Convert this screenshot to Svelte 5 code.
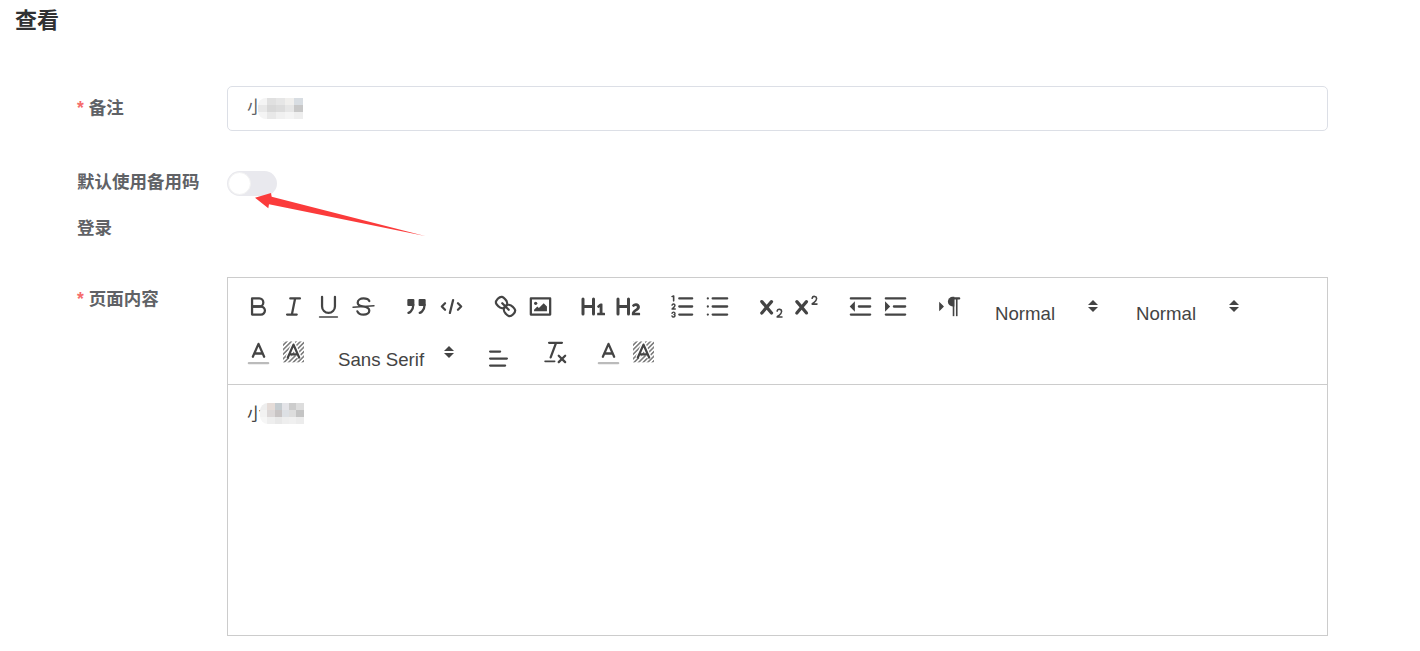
<script>
  const stroke = 'fill:none;stroke:#444;stroke-width:1.4;stroke-linecap:round;stroke-linejoin:round';
  const thin = 'fill:none;stroke:#444;stroke-width:.9;stroke-linecap:round;stroke-linejoin:round';
  const input_cells = [
    '#f4f4f4','#e0e0e0','#e6e6e6','#f0efed','#d8dde2',
    '#e8e8e8','#d8d8d8','#dcdcdc','#e6e6e6','#c8c8c8',
    '#f4f4f4','#e8e8e8','#f0f0f0','#f4f4f4','#eeeeee'
  ];
  const body_cells = [
    '#eeeeee','#e5dcd8','#c5ccd0','#e4e4e8','#cccccc','#dddddd',
    '#f2f2f2','#dcd8d8','#c8c4c4','#dde0e4','#dddddd','#c4c4c4',
    '#f6f6f6','#eeeeee','#e8e8e8','#eeeeee','#f0f0f0','#ececec'
  ];
</script>

<div class="page">
  <h1>查看</h1>

  <form class="form">
    <div class="row row-name">
      <label class="label"><span class="req">*</span> 备注</label>
      <div class="field">
        <div class="input">
          <span>小</span>
          <div class="mosaic input-mosaic">
            {#each input_cells as c}<i style="background:{c}"></i>{/each}
          </div>
        </div>
      </div>
    </div>

    <div class="row row-switch">
      <label class="label">默认使用备用码登录</label>
      <div class="field">
        <div class="switch"><span class="knob"></span></div>
      </div>
    </div>

    <div class="row">
      <label class="label"><span class="req">*</span> 页面内容</label>
      <div class="field">
        <div class="editor">
          <div class="toolbar">
            <div class="group">
              <button type="button" aria-label="bold"><svg viewBox="0 0 18 18"><path style={stroke} d="M5,4H9.5A2.5,2.5,0,0,1,12,6.5v0A2.5,2.5,0,0,1,9.5,9H5Z"/><path style={stroke} d="M5,9h5.5A2.5,2.5,0,0,1,13,11.5v0A2.5,2.5,0,0,1,10.5,14H5Z"/></svg></button>
              <button type="button" aria-label="italic"><svg viewBox="0 0 18 18"><path style={stroke} d="M7 4H13M5 14H11M8 14L10 4"/></svg></button>
              <button type="button" aria-label="underline"><svg viewBox="0 0 18 18"><path style={stroke} d="M5,3V9a4,4,0,0,0,4,4h0a4,4,0,0,0,4-4V3"/><rect x="3" y="15" width="12" height="1" rx=".5" fill="#444"/></svg></button>
              <button type="button" aria-label="strike"><svg viewBox="0 0 18 18"><path style={stroke} d="M12.6 5.6C12 4.4 10.6 4 9 4 7 4 5.4 5 5.4 6.6 5.4 8 7 8.7 9 9c2 .3 3.6 1 3.6 2.6C12.6 13 11 14 9 14c-1.8 0-3.2-.6-3.8-2"/><path style={thin} d="M2.5 9.5L15.5 8.5"/></svg></button>
            </div>
            <div class="group">
              <button type="button" aria-label="blockquote"><svg viewBox="0 0 18 18"><rect style={stroke} x="4" y="5" width="3" height="3"/><rect style={stroke} x="11" y="5" width="3" height="3"/><path style={stroke} d="M7,8c0,4-3,5-3,5"/><path style={stroke} d="M14,8c0,4-3,5-3,5"/><rect x="4" y="5" width="3" height="3" fill="#444"/><rect x="11" y="5" width="3" height="3" fill="#444"/></svg></button>
              <button type="button" aria-label="code"><svg viewBox="0 0 18 18"><path style={stroke} d="M5 7L3 9L5 11M13 7L15 9L13 11M10 5L8 13"/></svg></button>
            </div>
            <div class="group">
              <button type="button" aria-label="link"><svg viewBox="0 0 18 18"><path style={stroke} d="M7 7L11 11"/><path style={stroke} d="M8.9,4.577a3.476,3.476,0,0,1,.36,4.679A3.476,3.476,0,0,1,4.577,8.9C3.185,7.5,2.035,6.4,4.217,4.217S7.5,3.185,8.9,4.577Z"/><path style={stroke} d="M13.423,9.1a3.476,3.476,0,0,0-4.679-.36,3.476,3.476,0,0,0,.36,4.679c1.392,1.392,2.5,2.542,4.679.36S14.815,10.5,13.423,9.1Z"/></svg></button>
              <button type="button" aria-label="image"><svg viewBox="0 0 18 18"><rect style={stroke} x="3" y="4" width="12" height="10"/><circle cx="6" cy="7" r="1" fill="#444"/><polygon fill="#444" points="5 12 5 11 7 9 8 10 11 7 13 9 13 12 5 12"/></svg></button>
            </div>
            <div class="group">
              <button type="button" class="heading" aria-label="header 1"><svg viewBox="0 0 18 18"><path fill="#444" d="M10,4V14a1,1,0,0,1-2,0V10H3v4a1,1,0,0,1-2,0V4a1,1,0,0,1,2,0V8H8V4a1,1,0,0,1,2,0Zm6.06787,9.209H14.98975V7.59863a.54085.54085,0,0,0-.605-.60547h-.62744a1.01119,1.01119,0,0,0-.748.29688L11.645,8.56641a.5435.5435,0,0,0-.022.8584l.28613.30762a.53861.53861,0,0,0,.84717.0332l.09912-.08789a1.2137,1.2137,0,0,0,.2417-.35254h.02246s-.01123.30859-.01123.60547V13.209H12.041a.54085.54085,0,0,0-.605.60547v.43945a.54085.54085,0,0,0,.605.60547h4.02686a.54085.54085,0,0,0,.605-.60547v-.43945A.54085.54085,0,0,0,16.06787,13.209Z"/></svg></button>
              <button type="button" class="heading" aria-label="header 2"><svg viewBox="0 0 18 18"><path fill="#444" d="M16.73975,13.81445v.43945a.54085.54085,0,0,1-.605.60547H11.855a.58392.58392,0,0,1-.64893-.60547V14.0127c0-2.90527,3.39941-3.42187,3.39941-4.55469a.77675.77675,0,0,0-.84717-.78125,1.17684,1.17684,0,0,0-.83594.38477c-.2749.26367-.561.374-.85791.13184l-.4292-.34082c-.30811-.24219-.38525-.51758-.1543-.81445a2.97155,2.97155,0,0,1,2.45361-1.17676,2.45393,2.45393,0,0,1,2.68408,2.40918c0,2.45312-3.1792,2.92676-3.27832,3.93848h2.79443A.54085.54085,0,0,1,16.73975,13.81445ZM9,3A.99974.99974,0,0,0,8,4V8H3V4A1,1,0,0,0,1,4V14a1,1,0,0,0,2,0V10H8v4a1,1,0,0,0,2,0V4A.99974.99974,0,0,0,9,3Z"/></svg></button>
            </div>
            <div class="group group-wide">
              <button type="button" aria-label="ordered list"><svg viewBox="0 0 18 18"><path style={stroke} d="M7 4H15M7 9H15M7 14H15"/><path fill="#444" d="M3.5,6A0.5,0.5,0,0,1,3,5.5V3.085l-0.276.138A0.5,0.5,0,0,1,2.053,3c-0.124-.247-0.023-0.324.224-0.447l1-.5A0.5,0.5,0,0,1,4,2.5v3A0.5,0.5,0,0,1,3.5,6Z"/><path style={thin} d="M4.5,10.5h-2c0-.234,1.85-1.076,1.85-2.234A0.959,0.959,0,0,0,2.5,8.156"/><path style={thin} d="M2.5,14.846a0.959,0.959,0,0,0,1.85-.109A0.7,0.7,0,0,0,3.75,14a0.688,0.688,0,0,0,.6-0.736,0.959,0.959,0,0,0-1.85-.109"/></svg></button>
              <button type="button" aria-label="bullet list"><svg viewBox="0 0 18 18"><path style={stroke} d="M6 4H15M6 9H15M6 14H15M3 4H3M3 9H3M3 14H3"/></svg></button>
            </div>
            <div class="group">
              <button type="button" aria-label="subscript"><svg viewBox="0 0 18 18"><path fill="#444" d="M15.5,15H13.861a3.858,3.858,0,0,0,1.914-2.975,1.8,1.8,0,0,0-1.6-1.751A1.921,1.921,0,0,0,12.021,11.7a0.50013,0.50013,0,1,0,.957.291h0a0.914,0.914,0,0,1,1.053-.725,0.81,0.81,0,0,1,.744.762c0,1.076-1.16971,1.86982-1.93971,2.43082A1.45639,1.45639,0,0,0,12,15.5a0.5,0.5,0,0,0,.5.5h3A0.5,0.5,0,0,0,15.5,15Z"/><path fill="#444" d="M9.65,5.241a1,1,0,0,0-1.409.108L6,7.964,3.759,5.349A1,1,0,0,0,2.192,6.59178Q2.21541,6.6213,2.241,6.649L4.684,9.5,2.241,12.35A1,1,0,0,0,3.71,13.70722q0.02557-.02768.049-0.05722L6,11.036,8.241,13.65a1,1,0,1,0,1.567-1.24277Q9.78459,12.3777,9.759,12.35L7.316,9.5,9.759,6.651A1,1,0,0,0,9.65,5.241Z"/></svg></button>
              <button type="button" aria-label="superscript"><svg viewBox="0 0 18 18"><path fill="#444" d="M15.5,7H13.861a4.015,4.015,0,0,0,1.914-2.975,1.8,1.8,0,0,0-1.6-1.751A1.922,1.922,0,0,0,12.021,3.7a0.5,0.5,0,1,0,.957.291,0.917,0.917,0,0,1,1.053-.725,0.81,0.81,0,0,1,.744.762c0,1.077-1.164,1.925-1.934,2.486A1.423,1.423,0,0,0,12,7.5a0.5,0.5,0,0,0,.5.5h3A0.5,0.5,0,0,0,15.5,7Z"/><path fill="#444" d="M9.651,5.241a1,1,0,0,0-1.41.108L6,7.964,3.759,5.349a1,1,0,1,0-1.519,1.3L4.683,9.5,2.241,12.35a1,1,0,1,0,1.519,1.3L6,11.036l2.241,2.614a1,1,0,0,0,1.519-1.3L7.317,9.5,9.759,6.651A1,1,0,0,0,9.651,5.241Z"/></svg></button>
            </div>
            <div class="group group-wide">
              <button type="button" aria-label="outdent"><svg viewBox="0 0 18 18"><path style={stroke} d="M3 4H15M8 9H15M3 14H15"/><polygon fill="#444" stroke="#444" points="5 7 5 11 3 9 5 7"/></svg></button>
              <button type="button" aria-label="indent"><svg viewBox="0 0 18 18"><path style={stroke} d="M3 4H15M8 9H15M3 14H15"/><polygon fill="#444" stroke="#444" points="3 7 3 11 5 9 3 7"/></svg></button>
            </div>
            <div class="group">
              <button type="button" aria-label="direction"><svg viewBox="0 0 18 18"><polygon fill="#444" stroke="#444" stroke-width=".8" points="3 11 5 9 3 7 3 11"/><path style={stroke} d="M11 4H15"/><path fill="#444" d="M11,3a3,3,0,0,0,0,6h1V3H11Z"/><rect fill="#444" x="11" y="4" width="1" height="11"/><rect fill="#444" x="13" y="4" width="1" height="11"/></svg></button>
            </div>

            <div class="picker">
              <span class="picker-label">Normal</span>
              <svg class="arrows" viewBox="0 0 10 12"><polygon points="0,5 5,0 10,5" /><polygon points="0,7 5,12 10,7" /></svg>
            </div>
            <div class="picker">
              <span class="picker-label">Normal</span>
              <svg class="arrows" viewBox="0 0 10 12"><polygon points="0,5 5,0 10,5" /><polygon points="0,7 5,12 10,7" /></svg>
            </div>

            <div class="group lower">
              <button type="button" aria-label="color"><svg viewBox="0 0 18 18"><path style="fill:none;stroke:#bbb;stroke-width:1.4;stroke-linecap:round" d="M3 15H15"/><path style={stroke} d="M5.5 11L9 3L12.5 11M11.63 9H6.37"/></svg></button>
              <button type="button" aria-label="background"><svg viewBox="0 0 18 18"><defs><pattern id="hatch" width="2" height="2" patternUnits="userSpaceOnUse" patternTransform="rotate(-45)"><rect width="2" height="1" fill="#555"/></pattern></defs><rect x="2.5" y="1.5" width="13" height="13" fill="url(#hatch)" opacity=".75"/><path style="fill:none;stroke:#fff;stroke-width:3" d="M5.5 11.5L9 3.5L12.5 11.5"/><path style={stroke} d="M5.5 11.5L9 3.5L12.5 11.5M11.63 9.5H6.37"/></svg></button>
            </div>
            <div class="picker picker-font">
              <span class="picker-label">Sans Serif</span>
              <svg class="arrows" viewBox="0 0 10 12"><polygon points="0,5 5,0 10,5" /><polygon points="0,7 5,12 10,7" /></svg>
            </div>
            <div class="group group-align">
              <button type="button" aria-label="align"><svg viewBox="0 0 18 18"><path style={stroke} d="M3.8 8.4H10M3.8 12.75H14.2M3.8 17.1H13.1"/></svg></button>
            </div>
            <div class="group group-clean">
              <button type="button" aria-label="clean"><svg viewBox="0 0 18 18"><path style={stroke} d="M5 3H13M6 12L9.35 3M11 11L15 15M15 11L11 15"/><rect fill="#444" x="2" y="14" width="7" height="1" rx=".5"/></svg></button>
            </div>
            <div class="group lower">
              <button type="button" aria-label="color"><svg viewBox="0 0 18 18"><path style="fill:none;stroke:#bbb;stroke-width:1.4;stroke-linecap:round" d="M3 15H15"/><path style={stroke} d="M5.5 11L9 3L12.5 11M11.63 9H6.37"/></svg></button>
              <button type="button" aria-label="background"><svg viewBox="0 0 18 18"><rect x="2.5" y="1.5" width="13" height="13" fill="url(#hatch)" opacity=".75"/><path style="fill:none;stroke:#fff;stroke-width:3" d="M5.5 11.5L9 3.5L12.5 11.5"/><path style={stroke} d="M5.5 11.5L9 3.5L12.5 11.5M11.63 9.5H6.37"/></svg></button>
            </div>
          </div>
          <div class="content">
            <span>小</span>
            <div class="mosaic body-mosaic">
              {#each body_cells as c}<i style="background:{c}"></i>{/each}
            </div>
          </div>
        </div>
      </div>
    </div>
  </form>

  <!-- annotation arrow on top of the screenshot -->
  <svg class="annotation" width="440" height="250" viewBox="0 0 440 250">
    <polygon fill="#fb3b3b" points="255,197.7 271,193 271.7,196.7 425,236 269,204.3 268.3,208.3"/>
  </svg>
</div>

<style>
  :global(body) {
    margin: 0;
    background: #fff;
  }
  .page {
    position: relative;
    height: 651px;
    overflow: hidden;
    font-family: "Liberation Sans", "Noto Sans CJK SC", sans-serif;
  }
  h1 {
    margin: 0;
    padding: 8px 0 0 15px;
    font-size: 22px;
    line-height: 26px;
    font-weight: 700;
    color: #303133;
  }
  .form {
    margin-top: 52px;
    padding: 0 92px 0 77px;
  }
  .row {
    display: flex;
    margin-bottom: 26px;
  }
  .row-name {
    margin-bottom: 28px;
  }
  .label {
    flex: 0 0 150px;
    box-sizing: border-box;
    padding-right: 20px;
    font-size: 17.5px;
    line-height: 44px;
    font-weight: 700;
    color: #606266;
  }
  .row-switch .label {
    line-height: 46px;
  }
  .req {
    color: #f56c6c;
  }
  .field {
    flex: 1;
    min-width: 0;
  }
  .input {
    position: relative;
    box-sizing: border-box;
    height: 45px;
    padding-left: 19px;
    border: 1px solid #dcdfe6;
    border-radius: 5px;
    font-size: 17.33px;
    line-height: 41px;
    color: #606266;
  }
  .mosaic {
    position: absolute;
    display: grid;
    overflow: hidden;
    border-radius: 8px 0 0 8px;
    filter: blur(.4px);
  }
  .mosaic i {
    display: block;
  }
  .input-mosaic {
    left: 30px;
    top: 11px;
    grid-template-columns: repeat(5, 9px);
    grid-auto-rows: 7px;
  }
  .body-mosaic {
    left: 32px;
    top: 18px;
    grid-template-columns: repeat(6, 7.3px);
    grid-auto-rows: 7px;
  }
  .switch {
    position: relative;
    width: 50px;
    height: 25px;
    margin-top: 12px;
    border-radius: 13px;
    background: #e9e9ee;
  }
  .knob {
    position: absolute;
    left: 1px;
    top: 1px;
    width: 21px;
    height: 21px;
    border: 1px solid #f2f2f2;
    border-radius: 50%;
    background: #fff;
  }
  .editor {
    box-sizing: border-box;
    height: 359px;
    border: 1px solid #ccc;
    display: flex;
    flex-direction: column;
  }
  .toolbar {
    display: flex;
    flex-wrap: wrap;
    align-content: flex-start;
    box-sizing: border-box;
    height: 107px;
    padding: 5px 0 0 12.5px;
    border-bottom: 1px solid #ccc;
  }
  .group {
    display: flex;
    margin-right: 18.5px;
  }
  .group-wide {
    margin-right: 19.5px;
  }
  .group-align {
    margin-right: 22.5px;
  }
  .group-clean {
    margin-right: 17.5px;
  }
  .group.lower {
    margin-right: 18px;
    margin-top: 2px;
  }
  .group.lower button {
    height: 44px;
  }
  button {
    width: 35px;
    height: 46px;
    padding: 0;
    border: 0;
    background: none;
    display: flex;
    align-items: center;
    justify-content: center;
  }
  button svg {
    width: 29px;
    height: 29px;
  }
  button.heading svg {
    width: 27px;
    height: 27px;
  }
  .picker {
    display: flex;
    justify-content: space-between;
    align-items: flex-start;
    box-sizing: border-box;
    width: 120px;
    height: 46px;
    margin-right: 21px;
    padding-left: 9.5px;
    padding-right: 7.5px;
    color: #444;
    font-size: 18.67px;
  }
  .picker-font {
    width: 133px;
    margin-right: 19px;
  }
  .picker-label {
    line-height: 22px;
    margin-top: 20px;
  }
  .arrows {
    width: 10px;
    height: 12px;
    margin-top: 17px;
    fill: #444;
  }
  .content {
    position: relative;
    flex: 1;
    padding: 18px 19px;
    font-size: 17.33px;
    line-height: 22px;
    color: #444;
  }
  .annotation {
    position: absolute;
    left: 0;
    top: 0;
    pointer-events: none;
  }
</style>
